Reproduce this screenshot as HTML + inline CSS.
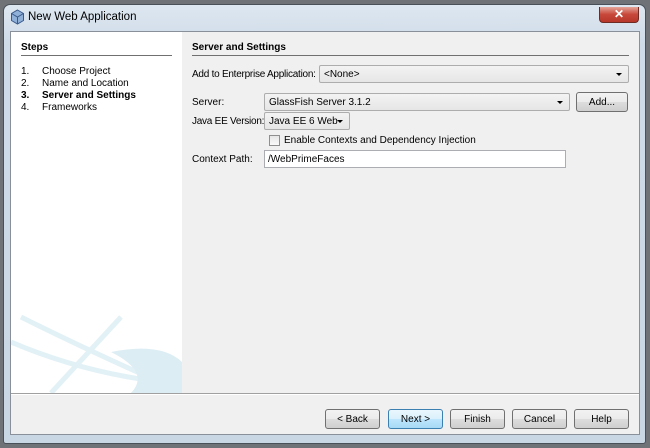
<!DOCTYPE html>
<html><head><style>
*{margin:0;padding:0;box-sizing:border-box}
body{width:650px;height:448px;overflow:hidden;background:#6f7378;font-family:"Liberation Sans",sans-serif;font-size:10px;color:#000;position:relative}
.frame{position:absolute;left:3px;top:4px;width:643px;height:440px;border:1px solid #4a5058;border-radius:7px 7px 3px 3px;background:linear-gradient(#dde7f1,#cfdbe8 40px,#c9d6e4);}
.title{position:absolute;left:28px;top:11px;font-size:11.5px;color:#000}
.close{position:absolute;left:599px;top:7px;width:40px;height:16px;border:1px solid #6d2b24;border-top:none;border-radius:0 0 4px 4px;background:linear-gradient(#e5a497,#c7473a 50%,#b8372b);color:#fff;font-weight:bold;text-align:center;font-size:12px;line-height:14px}
.inner{position:absolute;left:10px;top:31px;width:630px;height:404px;background:#f0f0f0;border:1px solid #8a9099}
.left{position:absolute;left:0;top:0;width:171px;height:361px;background:#fff;overflow:hidden}
.sep{position:absolute;left:0;top:361px;width:628px;height:1px;background:#a0a0a0}
.sep2{position:absolute;left:0;top:362px;width:628px;height:1px;background:#fff}
.t{position:absolute;white-space:nowrap}
.b{font-weight:bold}
.line{position:absolute;height:1px;background:#707070}
.combo{position:absolute;height:18px;border:1px solid #adadad;border-radius:2px;background:linear-gradient(#f3f3f3,#e6e6e6);padding-left:4px;line-height:17px}
.arr{position:absolute;right:6px;top:7px;width:0;height:0;border-left:3px solid transparent;border-right:3px solid transparent;border-top:3px solid #000}
.btn{position:absolute;height:20px;border:1px solid #707070;border-radius:3px;background:linear-gradient(#f2f2f2,#ebebeb 50%,#dddddd 51%,#cfcfcf);text-align:center;line-height:19px}
.field{position:absolute;height:18px;border:1px solid #abadb3;background:#fff;padding-left:3px;line-height:17px}
</style></head><body>
<div class="frame"></div>
<svg style="position:absolute;left:10px;top:9px" width="15" height="16" viewBox="0 0 15 16"><path d="M7.5 1L13.5 4.5V11.5L7.5 15L1.5 11.5V4.5Z" fill="#8fb0d8" stroke="#3a5a8a"/><path d="M1.5 4.5L7.5 8L13.5 4.5M7.5 8V15" fill="none" stroke="#3a5a8a"/></svg>
<div class="title">New Web Application</div>
<div class="close">✕</div>
<div class="inner">
 <div class="left">
  <div class="t b" style="left:10px;top:10px">Steps</div>
  <div class="line" style="left:10px;top:23px;width:151px"></div>
  <div class="t" style="left:10px;top:34px">1.</div><div class="t" style="left:31px;top:34px">Choose Project</div>
  <div class="t" style="left:10px;top:46px">2.</div><div class="t" style="left:31px;top:46px">Name and Location</div>
  <div class="t b" style="left:10px;top:58px">3.</div><div class="t b" style="left:31px;top:58px">Server and Settings</div>
  <div class="t" style="left:10px;top:70px">4.</div><div class="t" style="left:31px;top:70px">Frameworks</div>
  <svg style="position:absolute;left:0;top:280px" width="171" height="81"><g fill="none" stroke="#e2f1f6" stroke-width="5"><path d="M10 5 Q80 40 171 80"/><path d="M0 30 Q70 60 150 70"/><path d="M110 5 L40 81"/></g><path d="M100 40 Q150 30 171 50 L171 81 L120 81 Q140 60 100 40Z" fill="#dcedf3"/></svg>
 </div>
 <div class="t b" style="left:181px;top:10px">Server and Settings</div>
 <div class="line" style="left:181px;top:23px;width:437px"></div>
 <div class="t" style="left:181px;top:37px;letter-spacing:-0.25px">Add to Enterprise Application:</div>
 <div class="combo" style="left:308px;top:33px;width:310px">&lt;None&gt;<div class="arr"></div></div>
 <div class="t" style="left:181px;top:65px">Server:</div>
 <div class="combo" style="left:253px;top:61px;width:306px">GlassFish Server 3.1.2<div class="arr"></div></div>
 <div class="btn" style="left:565px;top:60px;width:52px">Add...</div>
 <div class="t" style="left:181px;top:84px;letter-spacing:-0.25px">Java EE Version:</div>
 <div class="combo" style="left:253px;top:80px;width:86px">Java EE 6 Web<div class="arr"></div></div>
 <div style="position:absolute;left:258px;top:103px;width:11px;height:11px;border:1px solid #8f8f8f;background:linear-gradient(#e6e6e6,#fafafa)"></div>
 <div class="t" style="left:273px;top:103px">Enable Contexts and Dependency Injection</div>
 <div class="t" style="left:181px;top:122px">Context Path:</div>
 <div class="field" style="left:253px;top:118px;width:302px">/WebPrimeFaces</div>
 <div class="sep"></div><div class="sep2"></div>
 <div class="btn" style="left:314px;top:377px;width:55px">&lt; Back</div>
 <div class="btn" style="left:377px;top:377px;width:55px;border-color:#3c7fb1;background:linear-gradient(#eaf6fd,#d9f0fc 50%,#bee6fd 51%,#a7d9f5)">Next &gt;</div>
 <div class="btn" style="left:439px;top:377px;width:55px">Finish</div>
 <div class="btn" style="left:501px;top:377px;width:55px">Cancel</div>
 <div class="btn" style="left:563px;top:377px;width:55px">Help</div>
</div>
</body></html>
